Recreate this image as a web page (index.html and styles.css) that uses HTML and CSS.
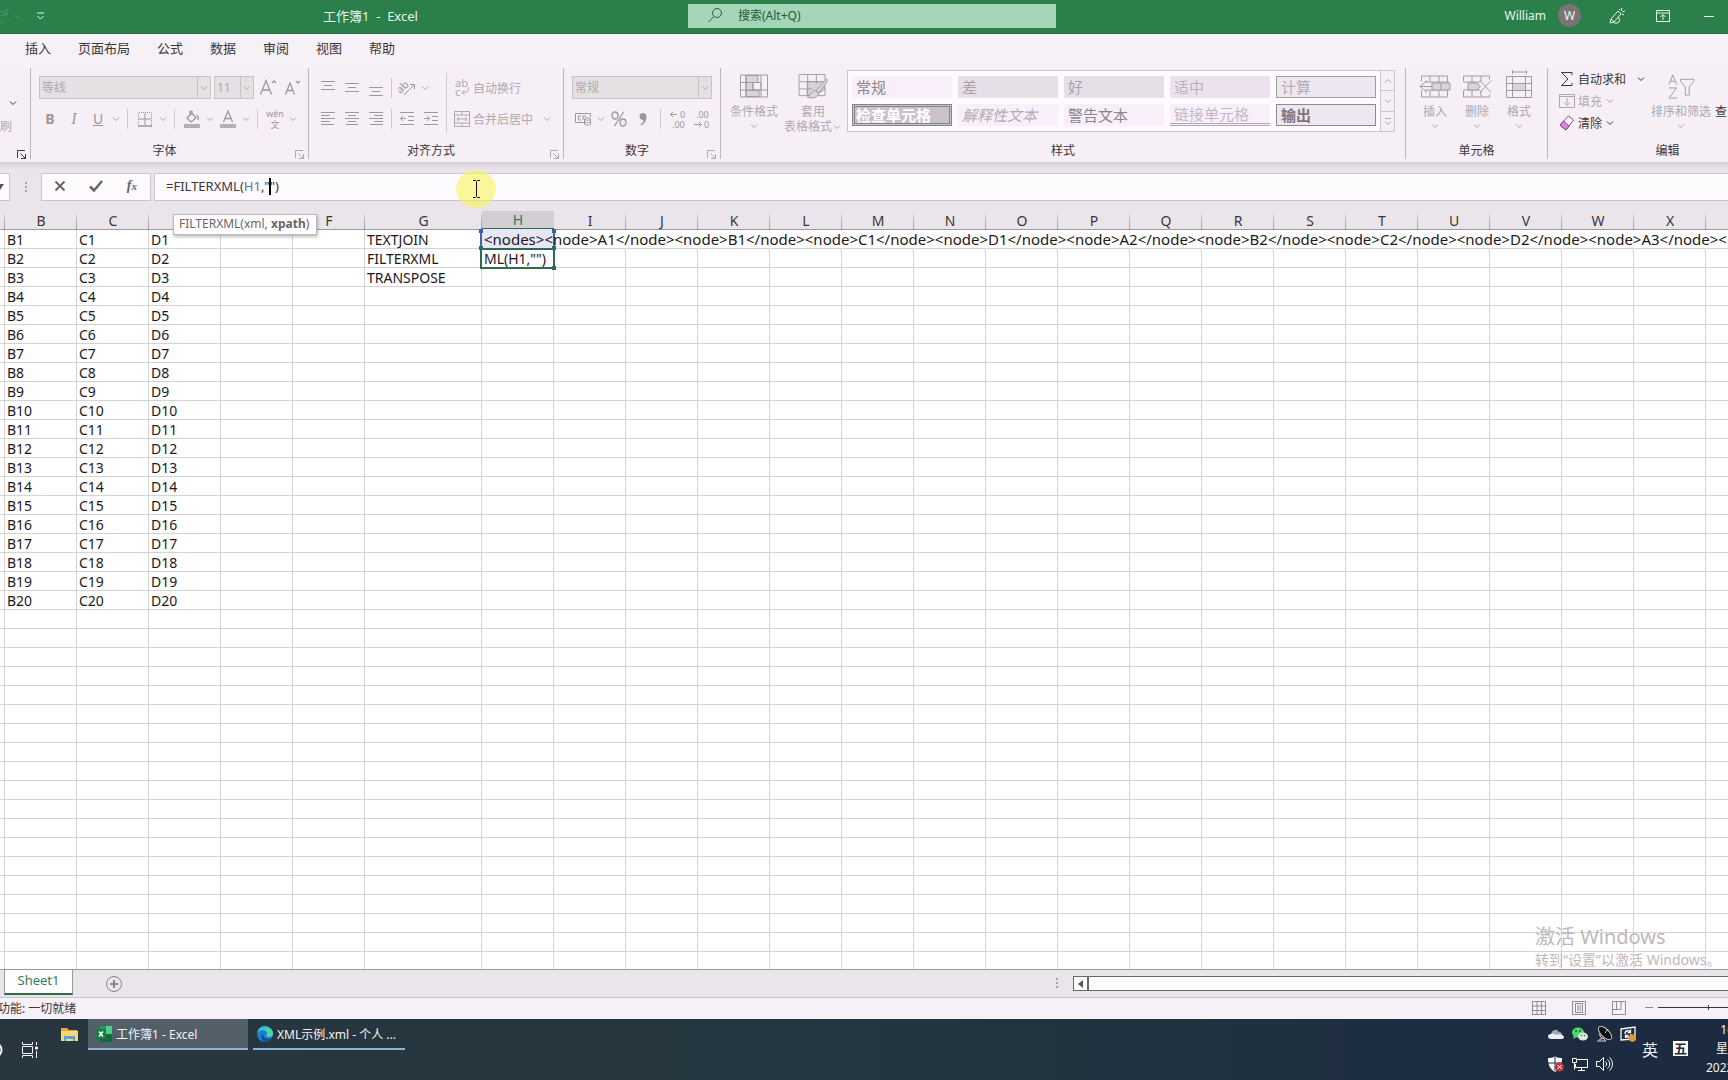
FILE: index.html
```html
<!DOCTYPE html>
<html lang="zh-CN">
<head>
    <meta charset="UTF-8">
    <meta name="viewport" content="width=device-width, initial-scale=1.0">
    <title>工作簿1 - Excel</title>
    <link rel="stylesheet" href="styles.css">
</head>
<body>
    <!-- Shared shapes -->
    <svg class="defs" aria-hidden="true">
        <symbol id="caret" viewBox="0 0 10 10"><path d="M2 3.5l3 3 3-3"/></symbol>
        <symbol id="caret-up" viewBox="0 0 10 10"><path d="M2 6.5l3-3 3 3"/></symbol>
        <symbol id="launcher" viewBox="0 0 9 9"><path d="M.5 8V.5H8M3.5 3.5l4.500 4.500M8.500 4v4.500H4"/></symbol>
    </svg>

    <header class="title-bar">
        <div class="quick-access">
            <svg class="redo" width="8" height="20" viewBox="0 0 8 20"><path d="M-3 9c3-5 7-4 9-1M7 3v6H1M0 17l3-1"/></svg>
            <svg class="redo" width="10" height="10"><use href="#caret"/></svg>
            <button class="qat" aria-label="自定义"><svg width="9" height="8" viewBox="0 0 9 8"><path d="M1 1h7M1.500 4l3 3 3-3"/></svg></button>
        </div>
        <div class="doc-title">工作簿1&nbsp; -&nbsp; Excel</div>
        <label class="search">
            <svg width="16" height="16" viewBox="0 0 16 16"><circle cx="10" cy="6" r="4.500"/><path d="M7 9.500L1.500 15"/></svg>
            <input type="text" placeholder="搜索(Alt+Q)" aria-label="搜索">
        </label>
        <div class="account">
            <span>William</span>
            <span class="avatar">W</span>
            <button class="win-btn" aria-label="墨迹"><svg width="18" height="18" viewBox="0 0 18 18"><path d="M2 16l1-4 7-8 3 3-7 8zM3 12l3 3M6 16h4l2-3-2-3M11 2l1 1M14 1l-1 3M17 4l-3 1M16 8l-2-1"/></svg></button>
            <button class="win-btn" aria-label="功能区"><svg width="14" height="12" viewBox="0 0 14 12"><path d="M.5 .5h13v11H.5zM.5 3h13M7 10V5M4.500 7L7 4.500 9.500 7"/></svg></button>
            <button class="win-btn" aria-label="最小化"><svg width="10" height="10" viewBox="0 0 10 10"><path d="M0 5.500h10"/></svg></button>
        </div>
    </header>

    <nav class="tabs">
        <a href="#">插入</a>
        <a href="#">页面布局</a>
        <a href="#">公式</a>
        <a href="#">数据</a>
        <a href="#">审阅</a>
        <a href="#">视图</a>
        <a href="#">帮助</a>
    </nav>

    <section class="ribbon">
        <div class="group clipboard">
            <div class="group-body">
                <svg class="caret dark" width="10" height="10"><use href="#caret"/></svg>
                <span>刷</span>
            </div>
            <div class="group-label"><svg class="launch dark" width="9" height="9"><use href="#launcher"/></svg></div>
        </div>

        <div class="group font-group">
            <div class="group-body rows">
                <div class="row">
                    <span class="combo combo-font"><select aria-label="字体" disabled><option>等线</option></select><svg class="caret" width="10" height="10"><use href="#caret"/></svg></span>
                    <span class="combo combo-size"><select aria-label="字号" disabled><option>11</option></select><svg class="caret" width="10" height="10"><use href="#caret"/></svg></span>
                    <button class="tool" disabled aria-label="增大字号"><svg width="18" height="18" viewBox="0 0 18 18"><path stroke-width="1.300" d="M1.500 15.500L7 1.500l5.500 14M3.500 11h7M13 4l2-2 2 2"/></svg></button>
                    <button class="tool" disabled aria-label="减小字号"><svg width="18" height="18" viewBox="0 0 18 18"><path stroke-width="1.300" d="M2.500 15.500L7 4l4.500 11.500M4 11.500h6M13 2l2 2 2-2"/></svg></button>
                </div>
                <div class="row">
                    <button class="tool letter bold" disabled>B</button>
                    <button class="tool letter italic" disabled>I</button>
                    <button class="tool letter underline" disabled>U</button>
                    <svg class="caret" width="10" height="10"><use href="#caret"/></svg>
                    <i class="sep"></i>
                    <button class="tool" disabled aria-label="边框"><svg width="16" height="16" viewBox="0 0 16 16"><path stroke-dasharray="1 1" d="M1.500 15V1.500h13V15"/><path d="M8 2v12M2 8h12"/><path stroke-width="1.500" d="M1 15h14"/></svg></button>
                    <svg class="caret" width="10" height="10"><use href="#caret"/></svg>
                    <i class="sep"></i>
                    <button class="tool" disabled aria-label="填充颜色"><svg width="18" height="18" viewBox="0 0 18 18"><path stroke-width="1.300" d="M4 8l5-5 4 5-5 4zM7 5V1.500h2V4M13.500 5c2 1 2 3 1.500 5"/><path class="fill" stroke="none" d="M1 14h16v4H1z"/></svg></button>
                    <svg class="caret" width="10" height="10"><use href="#caret"/></svg>
                    <button class="tool" disabled aria-label="字体颜色"><svg width="18" height="18" viewBox="0 0 18 18"><path stroke-width="1.300" d="M4.500 12L9 1l4.500 11M6 8.500h6"/><path class="fill" stroke="none" d="M1 14h16v4H1z"/></svg></button>
                    <svg class="caret" width="10" height="10"><use href="#caret"/></svg>
                    <i class="sep"></i>
                    <button class="tool pinyin" disabled><span>wén</span><span>文</span></button>
                    <svg class="caret" width="10" height="10"><use href="#caret"/></svg>
                </div>
            </div>
            <div class="group-label"><span>字体</span><svg class="launch" width="9" height="9"><use href="#launcher"/></svg></div>
        </div>

        <div class="group align-group">
            <div class="group-body columns">
                <div class="rows">
                    <div class="row">
                        <button class="tool" disabled aria-label="顶端对齐"><svg width="16" height="16" viewBox="0 0 16 16"><path d="M1 1.500h14M4 5.500h8M1 9.500h14"/></svg></button>
                        <button class="tool" disabled aria-label="垂直居中"><svg width="16" height="16" viewBox="0 0 16 16"><path d="M1 3.500h14M4 7.500h8M1 11.500h14"/></svg></button>
                        <button class="tool" disabled aria-label="底端对齐"><svg width="16" height="16" viewBox="0 0 16 16"><path d="M1 7.500h14M4 11.500h8M1 15.500h14"/></svg></button>
                        <i class="sep tight"></i>
                        <button class="tool" disabled aria-label="方向"><svg width="18" height="18" viewBox="0 0 18 18"><text x="-1" y="11" transform="rotate(-45 6 9)" font-size="11">ab</text><path d="M6 16L16 6M12 5.500h4.500V10"/></svg></button>
                        <svg class="caret" width="10" height="10"><use href="#caret"/></svg>
                    </div>
                    <div class="row">
                        <button class="tool" disabled aria-label="左对齐"><svg width="16" height="16" viewBox="0 0 16 16"><path d="M1 1.500h14M1 4.500h9M1 7.500h14M1 10.500h9M1 13.500h13"/></svg></button>
                        <button class="tool" disabled aria-label="居中"><svg width="16" height="16" viewBox="0 0 16 16"><path d="M1 1.500h14M4 4.500h8M1 7.500h14M4 10.500h8M2 13.500h12"/></svg></button>
                        <button class="tool" disabled aria-label="右对齐"><svg width="16" height="16" viewBox="0 0 16 16"><path d="M1 1.500h14M6 4.500h9M1 7.500h14M6 10.500h9M2 13.500h13"/></svg></button>
                        <i class="sep tight"></i>
                        <button class="tool" disabled aria-label="减少缩进"><svg width="16" height="16" viewBox="0 0 16 16"><path d="M1 1.500h14M9 5.500h6M9 9.500h6M1 13.500h14M7 7.500H1.500M4 5L1.500 7.500 4 10"/></svg></button>
                        <button class="tool" disabled aria-label="增加缩进"><svg width="16" height="16" viewBox="0 0 16 16"><path d="M1 1.500h14M9 5.500h6M9 9.500h6M1 13.500h14M1 7.500h5.500M4 5l2.500 2.500L4 10"/></svg></button>
                    </div>
                </div>
                <i class="divider"></i>
                <div class="rows">
                    <div class="row">
                        <button class="text-tool" disabled><svg width="16" height="20" viewBox="0 0 16 20"><text x="1" y="9" font-size="11">ab</text><text x="1" y="18" font-size="11">c</text><path d="M14.500 9v2c0 2-2 3.500-6 3.500M10.500 12L8 14.500l2.500 2.500"/></svg>自动换行</button>
                    </div>
                    <div class="row">
                        <button class="text-tool" disabled><svg width="16" height="16" viewBox="0 0 16 16"><path d="M.5 .5h15v15H.5zM.5 4h15M.5 12h15M8 .5V4M8 12v3.500M3 8h10M5 6L3 8l2 2M11 6l2 2-2 2"/></svg>合并后居中</button>
                        <svg class="caret spaced" width="10" height="10"><use href="#caret"/></svg>
                    </div>
                </div>
            </div>
            <div class="group-label"><span>对齐方式</span><svg class="launch" width="9" height="9"><use href="#launcher"/></svg></div>
        </div>

        <div class="group number-group">
            <div class="group-body rows">
                <div class="row">
                    <span class="combo combo-number"><select aria-label="数字格式" disabled><option>常规</option></select><svg class="caret" width="10" height="10"><use href="#caret"/></svg></span>
                </div>
                <div class="row">
                    <button class="tool" disabled aria-label="会计数字格式"><svg width="17" height="14" viewBox="0 0 17 14"><path d="M9 10.500H.5V1.500h15V5M6 4H3.500v4H6M8 8V4h3"/><path d="M9.500 7c0-1.500 6-1.500 6 0v5c0 1.500-6 1.500-6 0zM9.500 7c0 1.500 6 1.500 6 0M9.500 9.500c0 1.500 6 1.500 6 0"/></svg></button>
                    <svg class="caret" width="10" height="10"><use href="#caret"/></svg>
                    <button class="tool percent" disabled aria-label="百分比"><svg width="18" height="16" viewBox="0 0 18 16"><g stroke-width="1.300"><ellipse cx="5" cy="4.500" rx="3" ry="3.500"/><ellipse cx="13" cy="11.500" rx="3" ry="3.500"/><path d="M13.500 1L4.500 15"/></g></svg></button>
                    <button class="tool" disabled aria-label="千位分隔"><svg width="12" height="16" viewBox="0 0 12 16"><path fill="currentColor" stroke="none" d="M6 2c2.500 0 4 2 3.500 5-.5 3.500-2.500 6-5.500 7.500l-.5-1c2-1.500 3-3 3-4.500C4 9 2.500 7.500 2.500 5.500S4 2 6 2z"/></svg></button>
                    <i class="sep"></i>
                    <button class="tool" disabled aria-label="增加小数位数"><svg width="18" height="20" viewBox="0 0 18 20"><text x="11" y="9" font-size="9">0</text><text x="3" y="19" font-size="9">.00</text><path d="M8 5.500H1.500M4 3L1.500 5.500 4 8"/></svg></button>
                    <button class="tool" disabled aria-label="减少小数位数"><svg width="18" height="20" viewBox="0 0 18 20"><text x="3" y="9" font-size="9">.00</text><text x="11" y="19" font-size="9">0</text><path d="M1 15.500h7M6 13l2.500 2.500L6 18"/></svg></button>
                </div>
            </div>
            <div class="group-label"><span>数字</span><svg class="launch" width="9" height="9"><use href="#launcher"/></svg></div>
        </div>

        <div class="group style-group">
            <div class="group-body columns">
                <button class="big" disabled>
                    <svg width="28" height="24" viewBox="0 0 28 24"><path class="tint" d="M6 1h12v7H6zM6 8h7v8H6zM6 16h13v6H6z"/><path d="M.5 .5h27v22H.5zM6 .5v22M21 .5v22M.5 8H19M.5 15.500h27M13 8v7.500h8V8z"/></svg>
                    <span>条件格式</span>
                    <svg class="caret" width="10" height="10"><use href="#caret"/></svg>
                </button>
                <button class="big wide" disabled>
                    <svg width="30" height="26" viewBox="0 0 30 26"><path class="tint" d="M9 8h18v8l-9 6H9z"/><path d="M27.500 6V.5H.5v22H12M9.500 .5v22M18.500 .5v10M.5 8h23M.5 15.500h14M27.500 14v8.500H20"/><path class="tint" d="M29 5L18 17l3 2.500L30 8zM17 17c-4 0-3 5-8 7 4 2 11 1 12-4z"/></svg>
                    <span>套用</span>
                    <span>表格格式<svg class="caret" width="10" height="10"><use href="#caret"/></svg></span>
                </button>
                <div class="gallery">
                    <div class="gallery-grid">
                        <button class="style normal" disabled>常规</button>
                        <button class="style bad" disabled>差</button>
                        <button class="style good" disabled>好</button>
                        <button class="style neutral" disabled>适中</button>
                        <button class="style calc" disabled>计算</button>
                        <button class="style check" disabled>检查单元格</button>
                        <button class="style explain" disabled>解释性文本</button>
                        <button class="style warn" disabled>警告文本</button>
                        <button class="style linked" disabled>链接单元格</button>
                        <button class="style output" disabled>输出</button>
                    </div>
                    <div class="gallery-scroll">
                        <button disabled aria-label="上一行"><svg class="caret" width="10" height="10"><use href="#caret-up"/></svg></button>
                        <button disabled aria-label="下一行"><svg class="caret" width="10" height="10"><use href="#caret"/></svg></button>
                        <button disabled aria-label="其他"><svg class="caret" width="10" height="10" viewBox="0 0 10 10"><path d="M2 2.500h6M2 5.500l3 3 3-3"/></svg></button>
                    </div>
                </div>
            </div>
            <div class="group-label"><span>样式</span></div>
        </div>

        <div class="group cells-group">
            <div class="group-body columns">
                <button class="big narrow" disabled>
                    <svg width="32" height="24" viewBox="0 0 32 24"><path d="M2.500 7V1.500h26v6M2.500 16v6.500h26V16M11 1.500v6M20 1.500v6M11 16v6.500M20 16v6.500M6 7.500h24M6 15.500h24"/><path class="tint" d="M13 8.500h18v7H13z"/><path d="M8 6l-7 6 7 6M1 12h12M22 8.500v7"/></svg>
                    <span>插入</span>
                    <svg class="caret" width="10" height="10"><use href="#caret"/></svg>
                </button>
                <button class="big narrow" disabled>
                    <svg width="32" height="24" viewBox="0 0 32 24"><path d="M2.500 7V1.500h26V5M2.500 16v6.500h26V20M11 1.500v6M20 1.500v6M11 16v6.500M20 16v6.500M2.500 7.500H19M2.500 15.500H19"/><path class="tint" d="M7 8.500h9l3.500 3.500-3.500 3.500H7z"/><path d="M19 6l11 12M30 6L19 18"/></svg>
                    <span>删除</span>
                    <svg class="caret" width="10" height="10"><use href="#caret"/></svg>
                </button>
                <button class="big narrow tall" disabled>
                    <svg width="28" height="29" viewBox="0 0 28 29"><path class="tint" d="M7.500 13.500h13v7h-13z"/><path d="M1.500 6.500h25v21h-25zM7.500 6.500v21M20.500 6.500v21M1.500 13.500h25M1.500 20.500h25M7.500 0v4M21.500 0v4M7.500 2h14"/></svg>
                    <span>格式</span>
                    <svg class="caret" width="10" height="10"><use href="#caret"/></svg>
                </button>
            </div>
            <div class="group-label"><span>单元格</span></div>
        </div>

        <div class="group edit-group">
            <div class="group-body columns">
                <div class="stack">
                    <button class="text-tool enabled"><svg width="16" height="16" viewBox="0 0 16 16"><path d="M13 4V1.500H2.500L9 8l-6.500 6.500H13V12"/></svg>自动求和<svg class="caret dark spaced" width="10" height="10"><use href="#caret"/></svg></button>
                    <button class="text-tool" disabled><svg width="16" height="14" viewBox="0 0 16 14"><path d="M.5 .5h15v13H.5zM.5 2.500h15M8 4v7M5 8.500L8 11.500l3-3"/></svg>填充<svg class="caret" width="10" height="10"><use href="#caret"/></svg></button>
                    <button class="text-tool enabled"><svg class="eraser" width="16" height="16" viewBox="0 0 16 16"><path fill="#fff" d="M1 10L9.500 1l5 4L7 15z"/><path fill="#d987dd" d="M1 10l3.500-4L10 11l-3 4z"/></svg>清除<svg class="caret dark" width="10" height="10"><use href="#caret"/></svg></button>
                </div>
                <button class="big wide" disabled>
                    <svg width="30" height="26" viewBox="0 0 30 26"><path d="M2.500 11L6.500 1l4 10M4 7.500h5M2.500 14.500h8L2.500 25h8.500M14.500 5.500h14v2l-5 6V22h-4v-8.500l-5-6z"/></svg>
                    <span>排序和筛选</span>
                    <svg class="caret" width="10" height="10"><use href="#caret"/></svg>
                </button>
                <span class="find">查</span>
            </div>
            <div class="group-label"><span>编辑</span></div>
        </div>
    </section>

    <section class="formula-bar">
        <div class="name-box"><svg width="8" height="6" viewBox="0 0 8 6"><path d="M0 0h8L4 6z"/></svg></div>
        <span class="grip"></span>
        <div class="formula-buttons">
            <button aria-label="取消"><svg width="12" height="12" viewBox="0 0 12 12"><path d="M1.500 1.500l9 9M10.500 1.500l-9 9"/></svg></button>
            <button aria-label="输入"><svg width="14" height="12" viewBox="0 0 14 12"><path stroke-width="2.500" d="M1 6.500L5 10.500 13 1"/></svg></button>
            <button class="fx" aria-label="插入函数">f<sub>x</sub></button>
        </div>
        <div class="formula-input" contenteditable="true" spellcheck="false" role="textbox" aria-label="编辑栏">=FILTERXML(<span class="ref">H1</span>,"<i class="text-caret"></i>")</div>
        <div class="hint">FILTERXML(xml, <b>xpath</b>)</div>
        <div class="pointer"><svg width="9" height="18" viewBox="0 0 9 18"><path d="M1 .5h2.500l1 1 1-1H8M4.500 1.500v15M1 17.500h2.500l1-1 1 1H8"/></svg></div>
    </section>

    <main class="sheet">
        <table>
            <colgroup id="cols"></colgroup>
            <thead><tr id="head"></tr></thead>
            <tbody id="cells"></tbody>
        </table>
        <div class="watermark">
            <p>激活 Windows</p>
            <p>转到“设置”以激活 Windows。</p>
        </div>
    </main>

    <div class="sheet-tabs">
        <a class="sheet-tab" href="#">Sheet1</a>
        <button class="add-sheet" aria-label="新工作表"><svg width="18" height="18" viewBox="0 0 18 18"><circle cx="9" cy="9" r="7.500"/><path stroke-width="2" d="M9 5v8M5 9h8"/></svg></button>
        <span class="grip"></span>
        <div class="scrollbar"><button aria-label="向左滚动"><svg width="5" height="8" viewBox="0 0 5 8"><path d="M5 0v8L0 4z"/></svg></button></div>
    </div>

    <footer class="status-bar">
        <span class="status-text">功能: 一切就绪</span>
        <div class="views">
            <button aria-label="普通"><svg width="14" height="14" viewBox="0 0 14 14"><path d="M.5 .5h13v13H.5zM5 .5v13M9.500 .5v13M.5 5h13M.5 9.500h13"/></svg></button>
            <button aria-label="页面布局"><svg width="14" height="14" viewBox="0 0 14 14"><path d="M.5 .5h13v13H.5zM3.500 2.500h7v9h-7zM5 5h4M5 7h4M5 9h4"/></svg></button>
            <button aria-label="分页预览"><svg width="14" height="14" viewBox="0 0 14 14"><path d="M.5 .5h13v13H.5zM4.500 .5v8M9 .5v8M.5 8.500H9"/></svg></button>
            <button class="zoom-out" aria-label="缩小"><svg width="8" height="8" viewBox="0 0 8 8"><path d="M0 3.500h8"/></svg></button>
            <input class="zoom" type="range" min="0" max="100" value="90" aria-label="缩放">
        </div>
    </footer>

    <div class="taskbar">
        <div class="start"><svg width="6" height="20" viewBox="0 0 6 20"><circle cx="-6" cy="10" r="7.500"/></svg></div>
        <button class="task-view" aria-label="任务视图"><svg width="18" height="16" viewBox="0 0 18 16"><path d="M1.500 0v2.500h10V0M1.500 16v-2.500h10V16M1.500 4.500h10v7h-10zM15.500 0v3M15.500 9v7"/><path fill="#fff" d="M14.500 5h2v2h-2z"/></svg></button>
        <button class="folder" aria-label="文件资源管理器"><svg width="17" height="15" viewBox="0 0 17 15"><path fill="#e2a93c" d="M0 1h6l2 2h8v10H0z"/><path fill="#f7d876" d="M0 4h17v10H0z"/><path fill="#5aa2cf" d="M3 9h11v5h-2v-2H5v2H3z"/></svg></button>
        <button class="task active"><svg width="16" height="16" viewBox="0 0 16 16"><path fill="#1f9a57" d="M4 0h12v16H4z"/><path fill="#4fd08a" d="M10 0h6v8h-6z"/><path fill="#0f6b3a" d="M4 8h12v8H4z"/><path fill="#187a45" d="M0 3h10v10H0z"/><path stroke="#fff" stroke-width="1.500" d="M3 5.500l4 5M7 5.500l-4 5"/></svg><span>工作簿1 - Excel</span></button>
        <button class="task"><svg width="16" height="16" viewBox="0 0 16 16"><circle cx="8" cy="8" r="8" fill="#1b7fd0"/><path fill="#4fd6a0" d="M1 5c2-6 12-6 15 1 1 5-4 6-7 4 3-3 0-6-3-6-2 0-4 1-5 2z"/><path fill="#35b6ea" d="M1 5c1-3 4-5 7-5 3 0 4 2 2 3-4-1-7 0-9 4z"/><path fill="#0f4f9c" d="M6 8c0 4 4 6 9 4-2 3-5 4-7 4-3-1-5-5-2-8z"/></svg><span>XML示例.xml - 个人 ...</span></button>
        <div class="tray">
            <div class="tray-icons">
                <svg width="16" height="16" viewBox="0 0 16 16"><path fill="#9ea6b5" d="M4 10a4 4 0 017-4 3 3 0 013 3z"/><path fill="#eceef2" d="M3 8c2-1 4 0 5 1 3-2 8 0 8 2 0 1-1 2-2 2H3c-4 0-4-5 0-5z"/></svg>
                <svg width="16" height="16" viewBox="0 0 16 16"><ellipse cx="6" cy="6.500" rx="6" ry="5" fill="#4ed964"/><path fill="#4ed964" d="M2 9l-1 4 4-2z"/><ellipse cx="11" cy="10.500" rx="5" ry="4" fill="#d9eadf"/><g fill="#24573a"><circle cx="4" cy="5" r="1"/><circle cx="8" cy="5" r="1"/><circle cx="9.500" cy="9.500" r=".7"/><circle cx="12.500" cy="9.500" r=".7"/></g></svg>
                <svg width="16" height="16" viewBox="0 0 16 16"><ellipse cx="9" cy="7" rx="4" ry="8.500" transform="rotate(-45 9 7)" fill="#0b0b0d" stroke="#c4c6ca"/><path stroke="#d8d8dc" d="M9 7l3-4M3 8l3 5M1 15h9l-3-3-4 2"/></svg>
                <svg width="16" height="16" viewBox="0 0 16 16"><path stroke="#fff" stroke-width="1.300" d="M1 3l14-2v12L1 14zM5 8c0-4 4-4 5-2M10.500 3.500v3h-3M11 8c0 4-4 4-5 2M5.500 12V9.500h3"/><circle cx="12.500" cy="12" r="3.800" fill="#e39b2d"/></svg>
                <svg width="16" height="16" viewBox="0 0 16 16"><path fill="#fff" d="M7 0c2 2 5 2 7 2 0 7-2 11-7 14C2 13 0 9 0 2c2 0 5 0 7-2z"/><path stroke="#1c2a40" d="M7 0v15M0 7h14"/><circle cx="11.500" cy="11" r="4.500" fill="#c9303e"/><path stroke="#fff" d="M9.500 9l4 4M13.500 9l-4 4"/></svg>
                <svg width="16" height="16" viewBox="0 0 16 16"><path stroke="#fff" d="M5 3.500h10.500v8h-12V8M.5 2.500h4v4h-4zM2.500 6.500v7M9.500 11.500v3M6 14.500h7"/></svg>
                <svg width="17" height="16" viewBox="0 0 17 16"><path stroke="#fff" d="M.5 5.500h3l4-4v13l-4-4h-3zM9.500 5.500c1.500 1.500 1.500 3.500 0 5M11.500 3.500c3 3 3 6 0 9M13.500 1.500c4 4 4 9 0 13"/></svg>
            </div>
            <span class="ime">英</span>
            <span class="ime-mode">五</span>
            <div class="clock"><span>16</span><span>星</span><span>2022</span></div>
        </div>
    </div>

    <script>
        const letters = ['', 'B', 'C', 'D', 'E', 'F', 'G', 'H', 'I', 'J', 'K', 'L', 'M', 'N', 'O', 'P', 'Q', 'R', 'S', 'T', 'U', 'V', 'W', 'X', 'Y', 'Z'];
        const functions = ['TEXTJOIN', 'FILTERXML', 'TRANSPOSE'];
        const rowCount = 39;

        // The joined text that spills out of H1
        function joinedNodes() {
            let text = '<nodes>';
            for (let r = 1; r <= 3; r++) {
                for (const c of 'ABCD') {
                    text += '<node>' + c + r + '</node>';
                }
            }
            return text;
        }

        letters.forEach(letter => {
            const col = document.createElement('col');
            col.className = letter === '' ? 'col-first' : letter === 'G' ? 'col-wide' : 'col';
            document.getElementById('cols').appendChild(col);

            const th = document.createElement('th');
            th.textContent = letter;
            if (letter === 'H') th.className = 'selected';
            document.getElementById('head').appendChild(th);
        });

        for (let r = 1; r <= rowCount; r++) {
            const row = document.createElement('tr');
            letters.forEach(letter => {
                const td = document.createElement('td');
                if (r <= 20 && letter !== '' && 'BCD'.includes(letter)) td.textContent = letter + r;
                if (letter === 'G' && functions[r - 1]) td.textContent = functions[r - 1];
                if (letter === 'H' && r === 1) {
                    td.className = 'source';
                    td.innerHTML = '<span class="source-box"><i></i><i></i><i></i><i></i></span><span class="spill"></span>';
                    td.querySelector('.spill').textContent = joinedNodes();
                }
                if (letter === 'H' && r === 2) {
                    td.className = 'editing';
                    td.innerHTML = 'ML(H1,"")<span class="edit-box"></span>';
                }
                if (letter > 'H' && r === 1) td.className = 'covered';
                row.appendChild(td);
            });
            document.getElementById('cells').appendChild(row);
        }
    </script>
</body>
</html>
```
FILE: styles.css
```css
* {
    box-sizing: border-box;
}

html, body {
    margin: 0;
    padding: 0;
    height: 100%;
}

body {
    display: flex;
    flex-direction: column;
    overflow: hidden;
    font-family: "Noto Sans", "Noto Sans CJK SC", sans-serif;
    font-size: 12px;
    color: #3c363c;
    background: #eae5eb;
}

button, input, select {
    font: inherit;
    color: inherit;
    background: none;
    border: 0;
    padding: 0;
    margin: 0;
}

a {
    color: inherit;
    text-decoration: none;
}

svg {
    display: block;
    flex: none;
    fill: none;
    stroke: currentColor;
}

svg text {
    fill: currentColor;
    stroke: none;
}

.defs {
    position: absolute;
    width: 0;
    height: 0;
}

/* Title bar */
.title-bar {
    position: relative;
    flex: none;
    height: 34px;
    padding-bottom: 2px;
    display: flex;
    align-items: center;
    justify-content: space-between;
    background: #2b7f4b;
    border-bottom: 1px solid #2f6b48;
    color: #e6f8ea;
}

.quick-access {
    display: flex;
    align-items: center;
    width: 323px;
}

.redo {
    color: #4f9a6c;
    margin-right: 4px;
}

.qat {
    margin-left: 10px;
}

.doc-title {
    flex: 1;
    font-size: 13px;
}

.search {
    position: absolute;
    left: 50%;
    width: 368px;
    height: 24px;
    margin-left: -176px;
    padding: 0 0 1px 19px;
    display: flex;
    align-items: center;
    gap: 15px;
    background: #a5d6b7;
    color: #20603a;
}

.search input {
    flex: 1;
    outline: none;
}

.search input::placeholder {
    color: #20603a;
    opacity: 1;
}

.account {
    display: flex;
    align-items: center;
    padding-right: 14px;
}

.avatar {
    width: 23px;
    height: 23px;
    margin: 0 27px 0 12px;
    border-radius: 50%;
    background: #7a7476;
    text-align: center;
    line-height: 23px;
}

.win-btn + .win-btn {
    margin-left: 30px;
}

.win-btn:last-child {
    margin-left: 34px;
}

/* Ribbon */
.tabs {
    flex: none;
    height: 34px;
    display: flex;
    gap: 27px;
    padding-left: 25px;
    font-size: 13px;
    line-height: 28px;
    background: #f6f1f6;
}

.ribbon {
    flex: none;
    height: 94px;
    display: flex;
    align-items: flex-start;
    overflow: hidden;
    background: #f6f0f6;
    color: #aea8ae;
}

.group {
    flex: none;
    height: 91px;
    display: flex;
    flex-direction: column;
    border-right: 1px solid #bdb6bd;
}

.group-body {
    height: 75px;
    white-space: nowrap;
}

.group-label {
    display: flex;
    justify-content: center;
    align-items: flex-end;
    height: 16px;
    line-height: 16px;
    padding: 0 3px;
    color: #3c363c;
}

.group-label span {
    flex: 1;
    text-align: center;
}

.launch {
    margin-right: 1px;
    color: #aea8ae;
}

.dark {
    color: #3c363c;
}

.clipboard {
    width: 31px;
}

.clipboard .group-body {
    padding: 30px 0 0 8px;
}

.clipboard .group-body span {
    display: block;
    margin: 9px 0 0 -8px;
}

.clipboard .group-label {
    justify-content: flex-end;
}

.font-group {
    width: 278px;
}

.align-group {
    width: 255px;
}

.number-group {
    width: 157px;
}

.style-group {
    flex: 1;
}

.cells-group {
    width: 142px;
}

.edit-group {
    width: 240px;
    margin-right: -60px;
}

.rows {
    display: flex;
    flex-direction: column;
    gap: 8px;
    padding-top: 8px;
}

.group-body.rows {
    padding-left: 8px;
}

.row {
    height: 23px;
    display: flex;
    align-items: center;
    gap: 2px;
}

.columns {
    display: flex;
    align-items: flex-start;
    padding-left: 8px;
}

.combo {
    position: relative;
    height: 23px;
    border: 1px solid #c9c3c9;
    background: #e5e0e4;
    display: flex;
    align-items: center;
    margin-right: 1px;
}

.combo select {
    appearance: none;
    width: 100%;
    height: 21px;
    padding-left: 2px;
    opacity: 1;
}

.combo .caret {
    position: absolute;
    right: 1px;
    top: 6px;
}

.combo::after {
    content: "";
    position: absolute;
    right: 12px;
    top: 0;
    bottom: 0;
    border-left: 1px solid #c9c3c9;
}

.combo-font {
    width: 172px;
}

.combo-size {
    width: 40px;
}

.combo-number {
    width: 140px;
}

.tool {
    width: 22px;
    height: 22px;
    display: flex;
    align-items: center;
    justify-content: center;
    color: #9d979d;
}

.letter {
    font-size: 14px;
}

.bold {
    font-weight: bold;
}

.italic {
    font-family: "Liberation Serif", serif;
    font-style: italic;
    font-size: 16px;
}

.underline {
    text-decoration: underline;
}

.pinyin {
    flex-direction: column;
    font-size: 9px;
    line-height: 11px;
}

.fill {
    fill: #b5afb5;
}

.sep {
    width: 1px;
    height: 20px;
    margin: 0 4px;
    background: #cfc8cf;
}

.sep.tight {
    margin: 0 2px;
}

.divider {
    width: 1px;
    height: 60px;
    margin: 5px 7px 0 4px;
    background: #cfc8cf;
}

.text-tool {
    display: flex;
    align-items: center;
    gap: 3px;
    height: 23px;
}

.spaced {
    margin-left: 7px;
}

.enabled {
    color: #3c363c;
}

.eraser {
    color: #8c3c96;
}

.big {
    width: 50px;
    height: 72px;
    padding-top: 6px;
    margin-right: 4px;
    display: flex;
    flex-direction: column;
    align-items: center;
    line-height: 15px;
}

.big > svg:first-child {
    height: 25px;
    margin-bottom: 5px;
    color: #a29ca2;
}

.big span {
    display: flex;
    align-items: center;
    height: 15px;
}

.big > .caret {
    margin-top: 2px;
}

.big.wide {
    width: 60px;
}

.big.narrow {
    width: 42px;
    margin: 0;
}

.big.tall {
    padding-top: 2px;
}

.big.tall > svg:first-child {
    height: 29px;
}

.tint {
    fill: #d9d3da;
}

.gallery {
    flex: 1;
    height: 62px;
    margin: 2px 10px 0 0;
    display: flex;
    border: 1px solid #cdc7cd;
    background: #fdfbfe;
}

.gallery-grid {
    flex: 1;
    display: grid;
    grid-template-columns: repeat(5, 1fr);
    grid-auto-rows: 22px;
    gap: 6px;
    padding: 5px 4px;
}

.style {
    padding: 0 0 0 4px;
    text-align: left;
    font-size: 15px;
    line-height: 20px;
    background: #f8effb;
    color: #8a848a;
}

.style.bad, .style.good {
    background: #e7dfe8;
    color: #aaa2ab;
}

.style.neutral {
    background: #ebe2ed;
    color: #b9b0bb;
}

.style.calc {
    border: 1px solid #a39da3;
    background: #eee6f1;
    color: #b5acb7;
    line-height: 18px;
}

.style.output {
    border: 1px solid #8f898f;
    background: #eee6f1;
    color: #7d777d;
    font-weight: bold;
    line-height: 18px;
}

.style.check {
    border: 3px double #88828a;
    background: #c9c2cb;
    color: #fff;
    line-height: 16px;
    font-weight: bold;
    padding-left: 1px;
}

.style.explain {
    color: #b3abb5;
    font-style: italic;
}

.style.linked {
    border-bottom: 3px double #b0a8b2;
    color: #c2b8c5;
}

.gallery-scroll {
    width: 14px;
    display: flex;
    flex-direction: column;
    border-left: 1px solid #cdc7cd;
    background: #f6f0f6;
}

.gallery-scroll button {
    flex: 1;
    display: flex;
    align-items: center;
    justify-content: center;
}

.gallery-scroll button + button {
    border-top: 1px solid #cdc7cd;
}

.edit-group .columns {
    padding-left: 11px;
}

.stack {
    width: 92px;
    flex: none;
}

.stack .text-tool {
    height: 22px;
}

.edit-group .big {
    margin-right: 4px;
}

.find {
    margin-top: 36px;
    line-height: 15px;
    color: #3c363c;
}

/* Formula bar */
.formula-bar {
    position: relative;
    flex: none;
    height: 39px;
    display: flex;
    align-items: stretch;
    padding-top: 11px;
    background: linear-gradient(#d6ced8, #eae5eb 8px);
}

.name-box {
    width: 10px;
    display: flex;
    align-items: center;
    border: 1px solid #cbc4cb;
    border-left: 0;
    background: #fdfbfe;
}

.name-box svg {
    margin-left: -4px;
    fill: #5a545a;
    stroke: none;
}

.grip {
    width: 2px;
    height: 11px;
    align-self: center;
    background: repeating-linear-gradient(#a9a3a9 0 2px, transparent 2px 4px);
}

.formula-bar .grip {
    margin: 0 14px 0 15px;
}

.formula-buttons {
    width: 110px;
    display: flex;
    align-items: center;
    justify-content: space-between;
    padding: 0 13px 2px 12px;
    border: 1px solid #cbc4cb;
    background: #fdfbfe;
    color: #6b656b;
}

.formula-buttons svg {
    stroke-width: 2;
}

.fx {
    font: italic bold 14px "Liberation Serif", serif;
}

.fx sub {
    font-size: 11px;
    line-height: 0;
    vertical-align: baseline;
}

.formula-input {
    flex: 1;
    margin-left: 3px;
    padding-left: 11px;
    border: 1px solid #cbc4cb;
    border-right: 0;
    background: #fdfbfe;
    outline: none;
    font-size: 13px;
    line-height: 24px;
    white-space: nowrap;
}

.ref {
    color: #4a78a8;
}

.text-caret {
    display: inline-block;
    width: 2px;
    height: 17px;
    margin: 0 -1px;
    vertical-align: -4px;
    background: #000;
}

.hint {
    position: absolute;
    left: 173px;
    top: 52px;
    z-index: 3;
    height: 21px;
    padding: 0 7px 0 5px;
    border: 1px solid #bdb7bd;
    background: #fff;
    box-shadow: 1px 2px 3px rgba(0, 0, 0, 0.25);
    color: #6b656b;
    line-height: 17px;
    white-space: nowrap;
}

.pointer {
    position: absolute;
    left: 456px;
    top: 8px;
    z-index: 3;
    width: 40px;
    height: 38px;
    display: flex;
    align-items: center;
    justify-content: center;
    border-radius: 50%;
    background: rgba(247, 243, 90, 0.6);
    color: #111;
}

/* Worksheet */
.sheet {
    position: relative;
    flex: 1;
    min-height: 0;
    overflow: hidden;
    background: #fff;
}

table {
    table-layout: fixed;
    width: 1850px;
    border-collapse: separate;
    border-spacing: 0;
}

.col-first {
    width: 5px;
}

.col {
    width: 72px;
}

.col-wide {
    width: 117px;
}

th {
    height: 29px;
    padding: 12px 0 0;
    font-size: 14px;
    font-weight: normal;
    line-height: 16px;
    border-bottom: 1px solid #9f999f;
    background: linear-gradient(#eae5eb, #8f898f) right 10px / 1px 20px no-repeat #eae5eb;
}

th.selected {
    padding-top: 11px;
    border-bottom: 2px solid #2f6b4e;
    background: linear-gradient(#eae5eb 10px, #d2ced2 10px);
    color: #2f7a5a;
}

td {
    height: 19px;
    padding: 2px 0 0 2px;
    border-right: 1px solid #d4d2d4;
    border-bottom: 1px solid #d4d2d4;
    font-size: 14px;
    line-height: 16px;
    white-space: nowrap;
    color: #1d181d;
}

td.covered {
    border-right-color: transparent;
}

.source, .editing {
    position: relative;
}

.editing {
    background: #fff;
}

.spill {
    position: relative;
    font-size: 15px;
    line-height: 14px;
}

.source-box, .edit-box {
    position: absolute;
    top: -1px;
    left: -2px;
    right: -2px;
    bottom: -2px;
    border: 2px solid #2f6b4e;
}

.source-box {
    border-color: transparent #4267a8;
    background: #e6e6f7;
}

.source-box i {
    position: absolute;
    width: 4px;
    height: 4px;
    background: #3a5f9c;
}

.source-box i:nth-child(odd) {
    left: -3px;
}

.source-box i:nth-child(even) {
    right: -3px;
}

.source-box i:nth-child(-n+2) {
    top: -2px;
}

.source-box i:nth-child(n+3) {
    bottom: -2px;
}

.edit-box::after {
    content: "";
    position: absolute;
    right: -3px;
    bottom: -3px;
    width: 4px;
    height: 4px;
    background: #2f6b4e;
}

.watermark {
    position: absolute;
    right: 0;
    bottom: 0;
    width: 193px;
    white-space: nowrap;
    color: #bdb8bd;
    font-size: 14px;
    line-height: 18px;
}

.watermark p {
    margin: 0;
}

.watermark p:first-child {
    font-size: 20px;
    line-height: 28px;
}

/* Sheet tabs and status bar */
.sheet-tabs {
    flex: none;
    height: 29px;
    display: flex;
    align-items: center;
    border-top: 1px solid #9f999f;
    border-bottom: 1px solid #cbc4cb;
    background: #eae5eb;
    color: #8b858b;
}

.sheet-tab {
    width: 69px;
    height: 25px;
    margin-left: 4px;
    align-self: flex-start;
    text-align: center;
    font-size: 13px;
    line-height: 21px;
    color: #3a7a5a;
    background: #fdfdfd;
    border: 1px solid #9f999f;
    border-top: 0;
    border-bottom: 2px solid #2f6b4e;
}

.add-sheet {
    margin-left: 32px;
}

.sheet-tabs .grip {
    margin: 0 15px 0 auto;
}

.scrollbar {
    width: calc(38% - 2px);
    height: 15px;
    display: flex;
    border: 1px solid #6b656b;
    border-right: 0;
    background: #fdfdfd;
}

.scrollbar button {
    width: 15px;
    display: flex;
    align-items: center;
    justify-content: center;
    border-right: 2px solid #6b656b;
}

.scrollbar svg {
    fill: #5a545a;
    stroke: none;
}

.status-bar {
    flex: none;
    height: 21px;
    padding-bottom: 2px;
    display: flex;
    align-items: center;
    justify-content: space-between;
    overflow: hidden;
    background: #f6f1f6;
}

.status-text {
    margin-left: -2px;
}

.views {
    display: flex;
    align-items: center;
    margin-right: -30px;
    color: #918b91;
}

.views button {
    margin-right: 26px;
}

.views .zoom-out {
    margin: 0 5px 0 -7px;
}

.zoom {
    appearance: none;
    width: 100px;
    height: 10px;
    background: linear-gradient(#3c363c, #3c363c) center / 100% 1px no-repeat,
        linear-gradient(#3c363c, #3c363c) center / 1px 5px no-repeat;
}

.zoom::-webkit-slider-thumb {
    appearance: none;
    width: 5px;
    height: 10px;
    background: #3c363c;
}

/* Taskbar */
.taskbar {
    flex: none;
    height: 61px;
    display: flex;
    align-items: center;
    overflow: hidden;
    background: linear-gradient(90deg, #28363f, #24363f 50%, #1e2e41 80%, #1d2a40);
    color: #f2f4f6;
}

.start {
    width: 21px;
    stroke-width: 2;
}

.folder, .task {
    height: 31px;
    align-self: flex-start;
    display: flex;
    align-items: center;
}

.folder {
    width: 27px;
    margin-left: 22px;
}

.folder svg, .task svg, .tray-icons svg {
    stroke: none;
}

.task {
    width: 160px;
    padding: 0 4px 0 8px;
    gap: 4px;
    white-space: nowrap;
    border-bottom: 2px solid #8fb4d8;
}

.task.active {
    background: #53606a;
}

.task:not(.active) {
    width: 152px;
    margin-left: 5px;
    padding-left: 4px;
}

.tray {
    margin-left: auto;
    padding-bottom: 2px;
    display: flex;
    align-items: center;
}

.tray-icons {
    display: grid;
    grid-template-columns: repeat(4, 16px);
    gap: 14px 8px;
}

.ime {
    margin-left: 6px;
    font-size: 16px;
}

.ime-mode {
    width: 15px;
    height: 15px;
    margin: 0 18px 0 15px;
    background: #fff;
    color: #1d2a40;
    font-size: 13px;
    font-weight: bold;
    line-height: 14px;
    text-align: center;
}

.clock {
    width: 22px;
    display: flex;
    flex-direction: column;
    align-items: flex-end;
    line-height: 19px;
}

.clock span:first-child {
    margin-right: -6px;
}

.clock span:last-child {
    align-self: flex-start;
}
```
